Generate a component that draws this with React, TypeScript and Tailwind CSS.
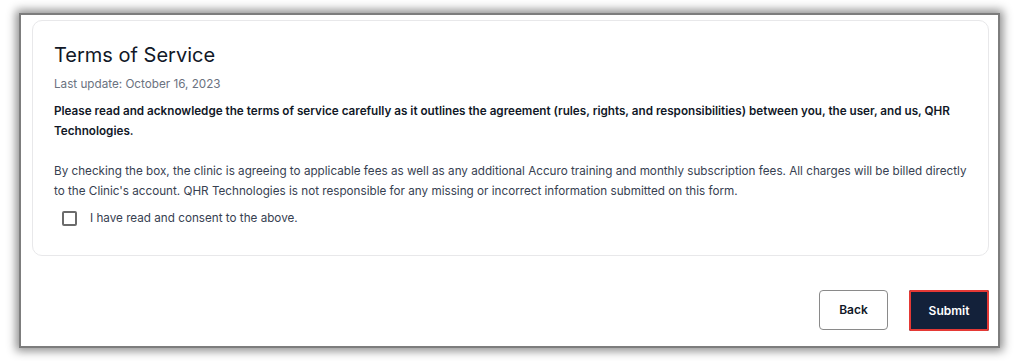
const App = () => {
  return (
    <div className="w-[1020px] h-[361px] bg-white pt-[13px] pl-[19px] font-['Inter','Liberation_Sans',sans-serif]">
      <div className="w-[981px] h-[335px] border-2 border-[#7d7d7d] bg-white shadow-[0_0_9px_3px_rgba(0,0,0,0.45)] pt-[5px] pl-[11px] pr-[9px] flex flex-col">
        {/* Terms card */}
        <section className="h-[236px] rounded-[10px] border border-[#e8e8ea] px-[21px] pt-[20px] text-[#111827]">
          <h1 className="text-[20px] leading-[28px] text-[#111827]">Terms of Service</h1>
          <p className="mt-[5px] text-[11.7px] leading-[20px] text-[#6b7280]">Last update: October 16, 2023</p>
          <p className="mt-[7px] text-[11.7px] leading-[20px] font-semibold">
            Please read and acknowledge the terms of service carefully as it outlines the agreement (rules, rights, and
            responsibilities) between you, the user, and us, QHR Technologies.
          </p>
          <p className="mt-[20px] text-[11.7px] leading-[20px] text-[#374151]">
            By checking the box, the clinic is agreeing to applicable fees as well as any additional Accuro training and
            monthly subscription fees. All charges will be billed directly to the Clinic's account. QHR Technologies is not
            responsible for any missing or incorrect information submitted on this form.
          </p>
          <label className="mt-[7px] ml-[8px] flex items-center gap-[13px] text-[11.7px] leading-[20px] text-[#374151]">
            <span className="w-[15px] h-[15px] rounded-[2px] border-2 border-[#6b6b6b] bg-white" />
            I have read and consent to the above.
          </label>
        </section>

        {/* Actions */}
        <div className="mt-[34px] flex justify-end gap-[21px]">
          <button className="w-[69px] h-[40px] rounded-[4px] border border-[#8a8a8a] bg-white text-[12px] font-semibold text-[#111827]">
            Back
          </button>
          <button className="w-[80px] h-[41px] rounded-[2px] bg-[#13213a] text-[12px] font-semibold text-white outline-2 outline-[#e53935] -outline-offset-2">
            Submit
          </button>
        </div>
      </div>
    </div>
  );
};

export default App;
